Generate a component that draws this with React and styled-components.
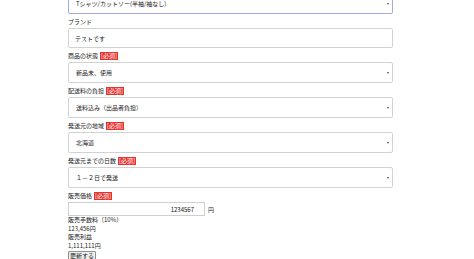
import React from "react";
import styled, { createGlobalStyle } from "styled-components";

const Global = createGlobalStyle`
  html, body { margin: 0; padding: 0; background: #fff; }
  body { font-family: "Noto Sans CJK JP", "Noto Sans", sans-serif; color: #222; overflow: hidden; }
`;

const Page = styled.div`
  width: 474px;
  height: 259px;
  overflow: hidden;
`;

const Form = styled.form`
  margin: -7px 0 0 68px;
  width: 325px;
  display: flex;
  flex-direction: column;
`;

const Label = styled.div`
  height: 14px;
  display: flex;
  align-items: center;
  gap: 2px;
  font-size: 6px;
  line-height: 8px;
  color: #222;
  padding-top: 1px;
  box-sizing: border-box;
`;

const Badge = styled.span`
  background: #e5322b;
  color: #fff;
  font-size: 6px;
  line-height: 8px;
  padding: 0 1px;
`;

const SelectWrap = styled.div`
  position: relative;
  height: 21px;
  box-sizing: border-box;
  border: 1px solid ${(p) => (p.$focus ? "#a3aae6" : "#d2d2d2")};
  border-radius: 2px;
  display: flex;
  align-items: center;
  padding-left: 7px;
  font-size: 6px;
  color: #222;
  background: #fff;
  &::after {
    content: "";
    position: absolute;
    right: 3px;
    top: 50%;
    margin-top: -1px;
    border-left: 1.5px solid transparent;
    border-right: 1.5px solid transparent;
    border-top: 2px solid #444;
  }
`;

const TextBox = styled.div`
  height: 20px;
  box-sizing: border-box;
  border: 1px solid #d2d2d2;
  border-radius: 2px;
  display: flex;
  align-items: center;
  padding-left: 6px;
  font-size: 6px;
  color: #222;
`;

const PriceRow = styled.div`
  display: flex;
  align-items: center;
  gap: 3px;
  font-size: 6px;
`;

const PriceBox = styled.div`
  width: 137px;
  height: 14px;
  box-sizing: border-box;
  border: 1px solid #cfcfcf;
  display: flex;
  align-items: center;
  justify-content: flex-end;
  padding-right: 10px;
  font-size: 6px;
  color: #111;
`;

const Line = styled.div`
  font-size: 6px;
  line-height: 8.5px;
  color: #222;
`;

const Button = styled.button`
  align-self: flex-start;
  margin-top: 1px;
  height: 9px;
  padding: 0 1px;
  font-family: inherit;
  font-size: 6px;
  line-height: 7px;
  color: #222;
  background: #efefef;
  border: 1px solid #8f8f8f;
  border-radius: 1px;
`;

const Required = () => <Badge>[必須]</Badge>;

export default function App() {
  return (
    <Page>
      <Global />
      <Form>
        <SelectWrap $focus>Tシャツ/カットソー(半袖/袖なし)</SelectWrap>
        <Label>ブランド</Label>
        <TextBox>テストです</TextBox>
        <Label>商品の状態<Required /></Label>
        <SelectWrap>新品未、使用</SelectWrap>
        <Label>配送料の負担<Required /></Label>
        <SelectWrap>送料込み（出品者負担）</SelectWrap>
        <Label>発送元の地域<Required /></Label>
        <SelectWrap>北海道</SelectWrap>
        <Label>発送元までの日数<Required /></Label>
        <SelectWrap>１－２日で発送</SelectWrap>
        <Label>販売価格<Required /></Label>
        <PriceRow>
          <PriceBox>1234567</PriceBox>
          <span>円</span>
        </PriceRow>
        <Line>販売手数料（10%）</Line>
        <Line>123,456円</Line>
        <Line>販売利益</Line>
        <Line>1,111,111円</Line>
        <Button type="button">更新する</Button>
      </Form>
    </Page>
  );
}
